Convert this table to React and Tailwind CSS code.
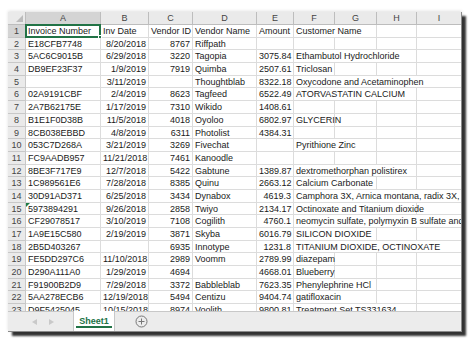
import React from "react";

const letters = ["A", "B", "C", "D", "E", "F", "G", "H", "I"];
const colW = ["w-[75px]", "w-[48px]", "w-[44px]", "w-[64px]", "w-[37px]", "w-[41px]", "w-[42px]", "w-[40px]", "w-[45px]"];
// width of column F when its text runs over G, H, I
const spanW = ["", "w-[41px]", "w-[83px]", "w-[123px]", "w-[168px]"];

// [invoice, date, vendor id, vendor name, amount, customer, span of customer]
const rows = [
  ["Invoice Number", "Inv Date", "Vendor ID", "Vendor Name", "Amount", "Customer Name", 2],
  ["E18CFB7748", "8/20/2018", "8767", "Riffpath", "", "", 1],
  ["5AC6C9015B", "6/29/2018", "3220", "Tagopia", "3075.84", "Ethambutol Hydrochloride", 3],
  ["DB9EF23F37", "1/9/2019", "7919", "Quimba", "2507.61", "Triclosan", 1],
  ["", "3/11/2019", "", "Thoughtblab", "8322.18", "Oxycodone and Acetaminophen", 4],
  ["02A9191CBF", "2/4/2019", "8623", "Tagfeed", "6522.49", "ATORVASTATIN CALCIUM", 3],
  ["2A7B62175E", "1/17/2019", "7310", "Wikido", "1408.61", "", 1],
  ["B1E1F0D38B", "11/5/2018", "4018", "Oyoloo", "6802.97", "GLYCERIN", 1],
  ["8CB038EBBD", "4/8/2019", "6311", "Photolist", "4384.31", "", 1],
  ["053C7D268A", "3/21/2019", "3269", "Fivechat", "", "Pyrithione Zinc", 2],
  ["FC9AADB957", "11/21/2018", "7461", "Kanoodle", "", "", 1],
  ["8BE3F717E9", "12/7/2018", "5422", "Gabtune", "1389.87", "dextromethorphan polistirex", 3],
  ["1C989561E6", "7/28/2018", "8385", "Quinu", "2663.12", "Calcium Carbonate", 2],
  ["30D91AD371", "6/25/2018", "3434", "Dynabox", "4619.3", "Camphora 3X, Arnica montana, radix 3X, Belladonna 3X", 4],
  ["5973894291", "9/26/2018", "2858", "Twiyo", "2134.17", "Octinoxate and Titanium dioxide", 3],
  ["CF29078517", "3/10/2019", "7108", "Cogilith", "4760.1", "neomycin sulfate, polymyxin B sulfate and bacitracin", 4],
  ["1A9E15C580", "2/19/2019", "3871", "Skyba", "6016.79", "SILICON DIOXIDE", 2],
  ["2B5D403267", "", "6935", "Innotype", "1231.8", "TITANIUM DIOXIDE, OCTINOXATE", 4],
  ["FE5DD297C6", "11/10/2018", "2989", "Voomm", "2789.99", "diazepam", 1],
  ["D290A111A0", "1/29/2019", "4694", "", "4668.01", "Blueberry", 1],
  ["F91900B2D9", "7/29/2018", "3372", "Babbleblab", "7623.35", "Phenylephrine HCl", 2],
  ["5AA278ECB6", "12/19/2018", "5494", "Centizu", "9404.74", "gatifloxacin", 2],
  ["D9F5425045", "10/15/2018", "8974", "Voolith", "9800.81", "Treatment Set TS331634", 3],
];

const Cell = ({ w, right, children, extra = "" }) => (
  <div
    className={`${w} shrink-0 h-full border-r border-b border-[#dcdcdc] px-[2px] whitespace-nowrap ${
      right ? "text-right" : "text-left"
    } ${extra}`}
  >
    {children}
  </div>
);

const Row = ({ r, n }) => {
  const span = r[6];
  const rest = colW.slice(5 + span);
  const head = n === 1;
  return (
    <div className="flex h-[12.7px] leading-[12.2px]">
      <div
        className={`w-[18px] shrink-0 text-center border-r border-b border-[#c8c8c8] text-[#444] ${
          head ? "bg-[#d4d4d4]" : "bg-[#eaeaea]"
        }`}
      >
        {n}
      </div>
      <Cell w={colW[0]} extra="relative">
        {n === 15 && (
          <span className="absolute left-0 top-0 w-0 h-0 border-t-[4px] border-r-[4px] border-t-[#1e7b45] border-r-transparent" />
        )}
        {head && (
          <span className="absolute -left-[1px] -top-[1px] -right-[1px] -bottom-[1px] border-2 border-[#217346]">
            <span className="absolute -right-[3px] -bottom-[3px] w-[4px] h-[4px] bg-[#217346] border border-white" />
          </span>
        )}
        {r[0]}
      </Cell>
      <Cell w={colW[1]} right={!head}>{r[1]}</Cell>
      <Cell w={colW[2]} right={!head}>{r[2]}</Cell>
      <Cell w={colW[3]}>{r[3]}</Cell>
      <Cell w={colW[4]} right={!head}>{r[4]}</Cell>
      <Cell w={spanW[span]}>{r[5]}</Cell>
      {rest.map((w, i) => (
        <Cell key={i} w={w} />
      ))}
    </div>
  );
};

export default function App() {
  return (
    <div className="w-[474px] h-[341px] bg-white pl-[8px] pt-[12px] font-['Liberation_Sans',Arial,sans-serif] text-[9px] text-[#1a1a1a]">
      <div className="w-[454px] h-[320px] flex flex-col overflow-hidden bg-white border-r border-b border-[#8a8a8a] shadow-[4px_4px_2px_rgba(0,0,0,0.8),0_-1px_3px_rgba(0,0,0,0.12)]">
        <div className="h-[300px] overflow-hidden">
          <div className="flex h-[13px] leading-[13px] text-[#444] bg-[#eaeaea]">
            <div className="w-[18px] shrink-0 relative border-r border-b border-[#bdbdbd]">
              <svg width="7" height="7" viewBox="0 0 7 7" className="absolute right-[2px] bottom-[2px]">
                <polygon points="7,0 7,7 0,7" fill="#bcbcbc" />
              </svg>
            </div>
            {letters.map((l, i) => (
              <div
                key={l}
                className={`${colW[i]} shrink-0 text-center border-r border-b ${
                  i === 0 ? "bg-[#d4d4d4] border-b-[#9c9c9c] border-r-[#bdbdbd]" : "border-[#bdbdbd]"
                }`}
              >
                {l}
              </div>
            ))}
          </div>
          {rows.map((r, i) => (
            <Row key={i} r={r} n={i + 1} />
          ))}
        </div>
        <div className="h-[20px] flex items-stretch bg-[#ececec] border-t border-[#c8c8c8]">
          <div className="w-[65px] flex items-center pl-[24px] gap-[12px]">
            <svg width="5" height="6" viewBox="0 0 5 6">
              <polygon points="5,0 5,6 0,3" fill="#c9c9c9" />
            </svg>
            <svg width="5" height="6" viewBox="0 0 5 6">
              <polygon points="0,0 5,3 0,6" fill="#c9c9c9" />
            </svg>
          </div>
          <div className="w-[42px] -mt-[1px] bg-white border-x border-[#c8c8c8] flex flex-col items-center justify-center">
            <span className="text-[#217346] font-bold text-[9px] leading-[10px] pt-[1px] border-b-2 border-[#217346] px-[3px]">
              Sheet1
            </span>
          </div>
          <div className="ml-[20px] flex items-center">
            <svg width="13" height="13" viewBox="0 0 13 13">
              <circle cx="6.5" cy="6.5" r="5.5" fill="none" stroke="#777" strokeWidth="1" />
              <path d="M6.5 3.5v6M3.5 6.5h6" stroke="#777" strokeWidth="1" />
            </svg>
          </div>
        </div>
      </div>
    </div>
  );
}
